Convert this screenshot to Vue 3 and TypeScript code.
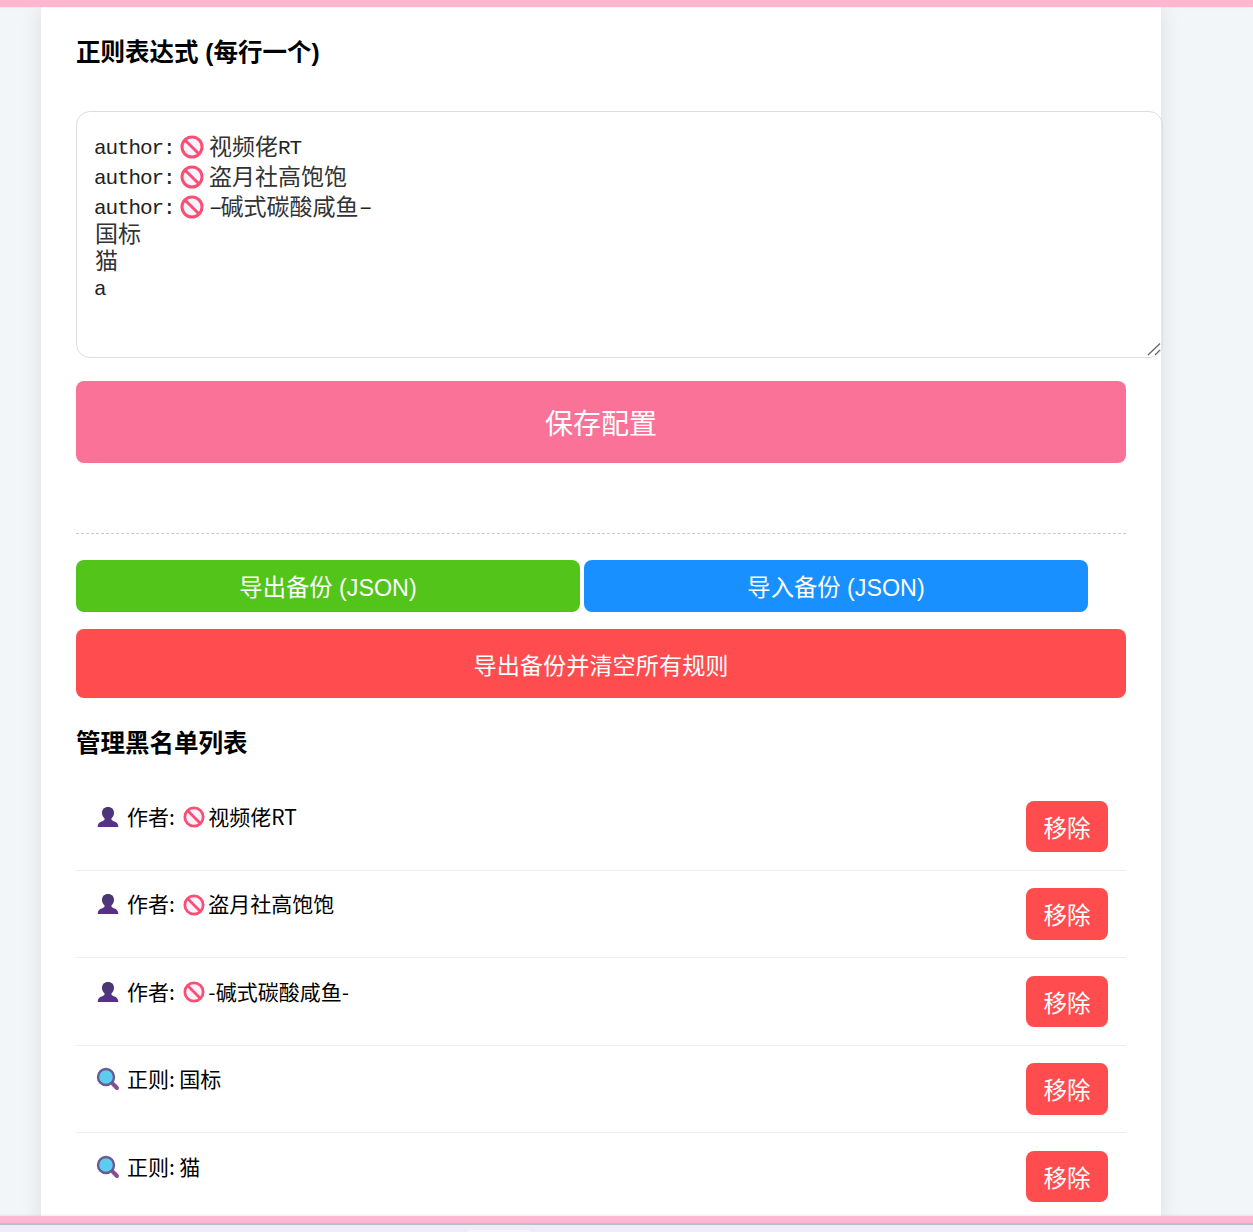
<script setup lang="ts">
interface Rule { kind: 'author' | 'regex'; label: string; name: string; banned: boolean }
const rules: Rule[] = [
  { kind: 'author', label: '作者:', name: '视频佬RT', banned: true },
  { kind: 'author', label: '作者:', name: '盗月社高饱饱', banned: true },
  { kind: 'author', label: '作者:', name: '-碱式碳酸咸鱼-', banned: true },
  { kind: 'regex', label: '正则:', name: '国标', banned: false },
  { kind: 'regex', label: '正则:', name: '猫', banned: false },
]
</script>

<template>
  <div class="page">
    <div class="bar bar-top"></div>
    <main class="viewport">
      <section class="card">
        <h3 class="title">正则表达式 (每行一个)</h3>
        <div class="editor">
          <div class="line tall"><span class="mono">author:</span><svg class="ban" viewBox="0 0 24 24"><circle cx="12" cy="12" r="10" fill="#f8f1ff" stroke="#fb4f72" stroke-width="3"/><path d="M5.2 5.2 18.8 18.8" stroke="#fb4f72" stroke-width="3"/></svg><span class="cjk">视频佬</span><span class="mono">RT</span></div>
          <div class="line tall"><span class="mono">author:</span><svg class="ban" viewBox="0 0 24 24"><circle cx="12" cy="12" r="10" fill="#f8f1ff" stroke="#fb4f72" stroke-width="3"/><path d="M5.2 5.2 18.8 18.8" stroke="#fb4f72" stroke-width="3"/></svg><span class="cjk">盗月社高饱饱</span></div>
          <div class="line tall"><span class="mono">author:</span><svg class="ban" viewBox="0 0 24 24"><circle cx="12" cy="12" r="10" fill="#f8f1ff" stroke="#fb4f72" stroke-width="3"/><path d="M5.2 5.2 18.8 18.8" stroke="#fb4f72" stroke-width="3"/></svg><span class="mono dash">-</span><span class="cjk">碱式碳酸咸鱼</span><span class="mono dash">-</span></div>
          <div class="line"><span class="cjk plain">国标</span></div>
          <div class="line"><span class="cjk plain">猫</span></div>
          <div class="line"><span class="mono single">a</span></div>
          <svg class="grip" viewBox="0 0 14 14"><path d="M1 13 13 1.500M8 13 13 8" stroke="#666" stroke-width="1.300" fill="none"/></svg>
        </div>
        <button class="btn save">保存配置</button>
        <div class="divider"></div>
        <div class="backup">
          <button class="btn half green">导出备份 (JSON)</button>
          <button class="btn half blue">导入备份 (JSON)</button>
        </div>
        <button class="btn clear">导出备份并清空所有规则</button>
        <h3 class="title manage">管理黑名单列表</h3>
        <ul class="list">
          <li v-for="r in rules" :key="r.name" class="row">
            <div class="row-text">
              <svg v-if="r.kind === 'author'" class="kind" viewBox="0 0 24 24">
                <defs><linearGradient id="bust" x1="0" y1="0" x2="0" y2="1"><stop offset="0" stop-color="#46386f"/><stop offset="1" stop-color="#5b2f8c"/></linearGradient></defs>
                <path fill="url(#bust)" d="M12 2c3.800 0 6 2.400 6 5.700 0 2.400-1 4.400-2.500 5.600v1.300c0 .9 1.200 1.400 3 2 2.400.8 3.500 2 3.900 5.400H1.600c.4-3.400 1.500-4.600 3.900-5.400 1.800-.6 3-1.100 3-2v-1.300C7 12.100 6 10.100 6 7.700 6 4.400 8.200 2 12 2Z"/>
              </svg>
              <svg v-else class="kind" viewBox="0 0 24 24">
                <path d="M15.500 15.500 21 21" stroke="#8a4d94" stroke-width="4" stroke-linecap="round"/>
                <circle cx="10" cy="10" r="8" fill="#5bcdee" stroke="#6a5a92" stroke-width="2.400"/>
              </svg>
              <span class="label">{{ r.label }}</span>
              <svg v-if="r.banned" class="ban small" viewBox="0 0 24 24"><circle cx="12" cy="12" r="10" fill="#f8f1ff" stroke="#fb4f72" stroke-width="3"/><path d="M5.200 5.200 18.800 18.800" stroke="#fb4f72" stroke-width="3"/></svg>
              <span v-else class="gap"></span>
              <span>{{ r.name }}</span>
            </div>
            <button class="btn remove">移除</button>
          </li>
        </ul>
      </section>
    </main>
    <div class="bar bar-bottom"></div>
    <div class="strip"></div>
  </div>
</template>

<style scoped>
.page {
  height: 1232px;
  display: flex;
  flex-direction: column;
  overflow: hidden;
  background: #f2f6f9;
  font-family: "Liberation Sans", "Noto Sans CJK SC", sans-serif;
  color: #000;
}
.bar { flex: none; height: 7px; background: #ffb6cf; position: relative; z-index: 2; }
.bar-top { box-shadow: 0 1px 2px rgba(0, 0, 0, 0.04); }
.bar-bottom { box-shadow: 0 -1px 2px rgba(0, 0, 0, 0.08); border-bottom: 2px solid #bdbcca; height: 9px; box-sizing: border-box; }
.strip { flex: none; height: 7px; background: #ecedf8; position: relative; }
.strip::after {
  content: "";
  position: absolute;
  left: 468px;
  top: 5px;
  width: 62px;
  height: 2px;
  border-radius: 2px 2px 0 0;
  background: #f4f5fb;
}
.viewport { flex: 1; min-height: 0; overflow: hidden; padding-left: 41px; }
.card {
  width: 1120px;
  box-sizing: border-box;
  padding: 0 35px;
  min-height: 100%;
  background: #fff;
  box-shadow: 0 0 20px rgba(0, 0, 0, 0.1);
}
.title { margin: 0; font-size: 24.500px; line-height: 36px; font-weight: 700; padding-top: 28px; }
.manage { padding-top: 28px; }
.editor {
  position: relative;
  width: 1087px;
  height: 247px;
  box-sizing: border-box;
  margin-top: 40px;
  padding: 20px 17px;
  border: 1px solid #ddd;
  border-radius: 14px;
  color: #222;
  overflow: hidden;
}
.grip { position: absolute; right: 1px; bottom: 1px; width: 14px; height: 14px; }
.line { height: 27px; line-height: 27px; white-space: pre; display: flex; align-items: center; }
.line.tall { height: 30px; line-height: 30px; }
.mono {
  font-family: "Liberation Mono", monospace;
  font-size: 21px;
  letter-spacing: -1.100px;
  padding-top: 4px;
}
.single { padding-top: 0; }
.dash { display: inline-block; transform: scaleX(1.700); }
.cjk { font-family: "Noto Sans CJK SC", sans-serif; font-size: 23px; line-height: 27px; color: #333; padding-bottom: 4px; }
.cjk.plain { padding-bottom: 6px; margin-left: 1px; }
.ban { width: 24px; height: 24px; margin: 0 5.500px 0 5px; flex: none; }
.btn { display: block; border: 0; color: #fff; font-family: inherit; cursor: pointer; padding: 0; }
.save {
  width: 100%;
  height: 82px;
  margin-top: 23px;
  border-radius: 8px;
  background: #fb7299;
  font-size: 28px;
}
.divider { margin-top: 70px; border-top: 1px dashed #ccc; }
.backup { display: flex; gap: 4px; margin-top: 26px; }
.half { width: 504px; height: 52px; border-radius: 8px; font-size: 23.300px; }
.green { background: #52c41a; }
.blue { background: #1890ff; }
.clear { width: 100%; height: 69px; margin-top: 17px; border-radius: 8px; background: #ff4d4f; font-size: 23.200px; }
.list { list-style: none; margin: 21.200px 0 0; padding: 0; }
.row {
  display: flex;
  justify-content: space-between;
  align-items: flex-start;
  height: 87.500px;
  box-sizing: border-box;
  padding: 17.600px 18px 0 20px;
  border-bottom: 1px solid #eee;
}
.row-text {
  display: flex;
  align-items: center;
  font-family: "Noto Sans CJK SC", sans-serif;
  font-size: 21px;
  line-height: 31px;
  white-space: pre;
}
.kind { width: 24px; height: 24px; margin: 1px 7px 0 0; flex: none; }
.label { margin-right: 8.500px; }
.ban.small { width: 22px; height: 22px; margin: 2px 3px 0 0; }
.gap { width: 0; margin-right: -4px; }
.remove { width: 82px; height: 51.500px; border-radius: 8px; background: #ff4d4f; font-size: 23.500px; }
</style>
